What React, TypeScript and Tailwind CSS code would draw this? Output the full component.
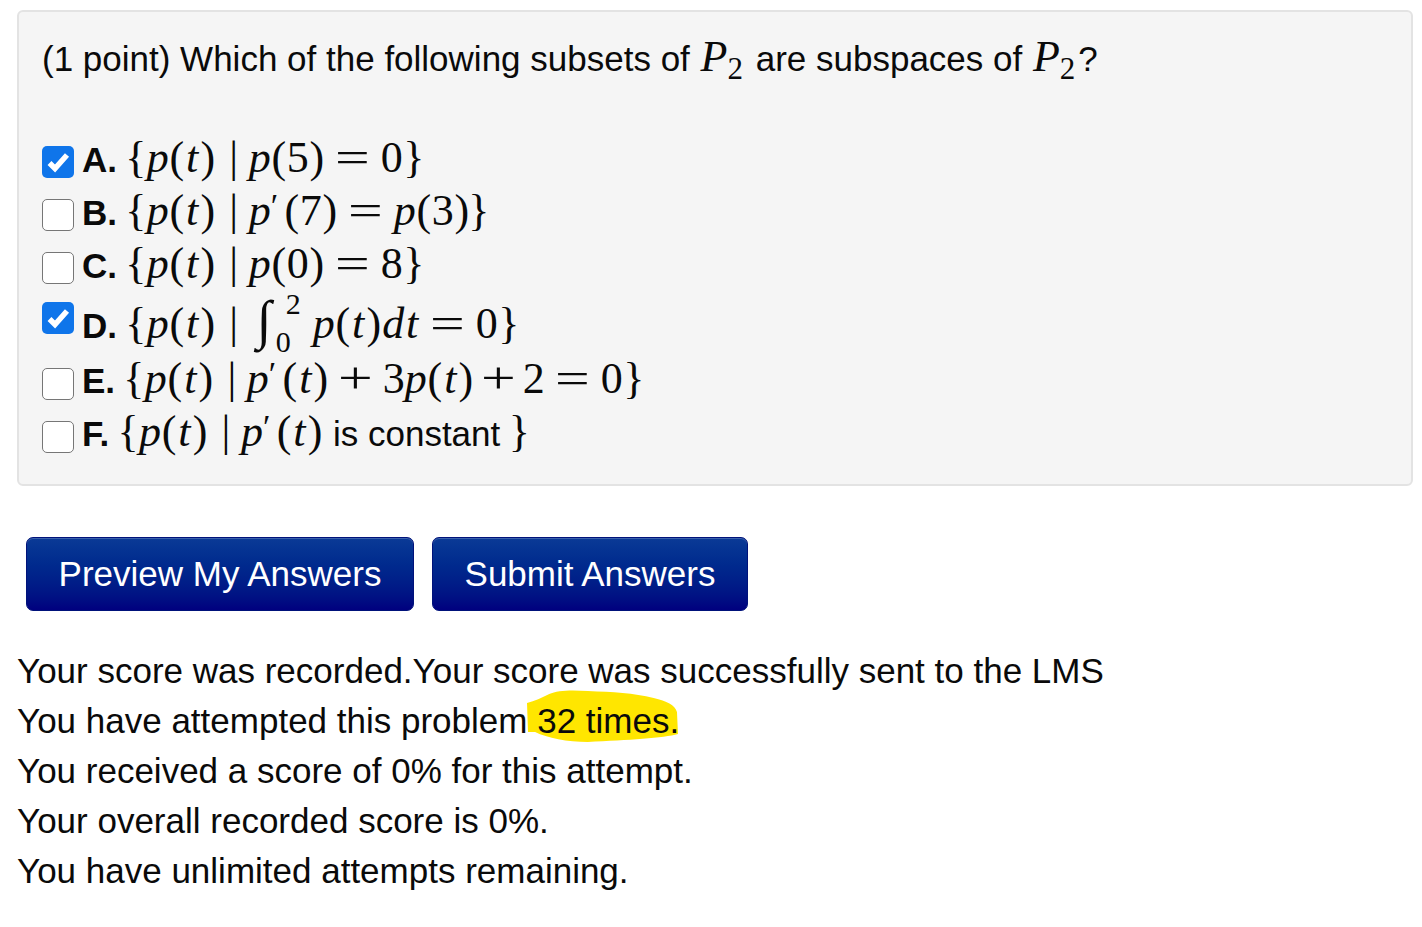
import React from "react";

const serif = "font-['Liberation_Serif',serif] text-[44px] leading-[44px]";
const g = "inline-block text-center ";
const it = "italic ";

const LB = () => <span className={g + "-ml-[2px] w-[22px]"}>{"{"}</span>;
const RB = ({ cls = "" }: { cls?: string }) => <span className={g + "w-[22px] " + cls}>{"}"}</span>;
const Pp = () => <span className={g + it + "w-[22px]"}>p</span>;
const Pr = () => <span className={"inline-block w-[13px] text-left text-[34px] align-[8px] leading-none"}>′</span>;
const L = () => <span className={g + "w-[16px]"}>(</span>;
const R = () => <span className={g + "w-[16px]"}>)</span>;
const Tt = () => <span className={g + it + "w-[15px]"}>t</span>;
const Bar = () => <span className={g + "w-[33px] pl-[3px]"}>|</span>;
const D = ({ c }: { c: string }) => <span className={g + "w-[22px]"}>{c}</span>;
const Op = ({ c, w = "w-[56px]" }: { c: string; w?: string }) => (
  <span className={g + w}>
    <span className="inline-block scale-x-[1.4]">{c}</span>
  </span>
);
const PT = () => (
  <>
    <Pp />
    <L />
    <Tt />
    <R />
  </>
);
const Head = () => (
  <>
    <LB />
    <PT />
    <Bar />
  </>
);
const Arg = ({ c }: { c: string }) => (
  <>
    <Pp />
    <L />
    <D c={c} />
    <R />
  </>
);

const P2 = () => (
  <span className="ml-[1px] mr-[3px] font-['Liberation_Serif',serif] text-[44px] leading-[44px] whitespace-nowrap">
    <span className="italic">P</span>
    <span className="text-[31px] leading-none align-[-8px]">2</span>
  </span>
);

const Box = ({ on, cls }: { on?: boolean; cls?: string }) =>
  on ? (
    <span className={"flex h-[32px] w-[32px] shrink-0 items-center justify-center rounded-[5px] bg-[#0f75ea] " + (cls ?? "")}>
      <svg viewBox="0 0 32 32" className="h-[32px] w-[32px]" fill="none">
        <path d="M7.5 17 L13 22.5 L25 9" stroke="#fff" strokeWidth="5.5" />
      </svg>
    </span>
  ) : (
    <span className={"h-[32px] w-[32px] shrink-0 rounded-[5px] border border-[#767676] bg-white " + (cls ?? "")} />
  );

const Row = ({
  label,
  on,
  children,
  h,
  boxCls,
  pt,
}: {
  label: string;
  on?: boolean;
  children: React.ReactNode;
  h: string;
  boxCls?: string;
  pt: string;
}) => (
  <div className={"flex items-start " + h}>
    <Box on={on} cls={boxCls} />
    <div className={"ml-[8px] whitespace-nowrap leading-[34px] " + pt}>
      <b className="font-bold">{label}</b> <span className={serif}>{children}</span>
    </div>
  </div>
);

const Btn = ({ children, w }: { children: React.ReactNode; w: string }) => (
  <button
    className={
      "h-[74px] rounded-[7px] border border-[#00127a] bg-gradient-to-b from-[#0b3a96] to-[#00007f] text-center text-[35px] text-white shadow-[inset_0_1px_0_rgba(255,255,255,0.2)] " +
      w
    }
  >
    {children}
  </button>
);

export default function App() {
  return (
    <div className="min-h-[927px] bg-white pl-[17px] pr-[9px] pt-[10px] font-['Liberation_Sans',Arial,sans-serif] text-[35px] text-[#0a0a0a]">
      <div className="h-[476px] rounded-[6px] border-2 border-[#e3e3e3] bg-[#f5f5f5] pl-[23px] pt-[22px]">
        <div className="flex h-[112px] items-start whitespace-nowrap leading-[50px]">
          <span>
            (1 point) Which of the following subsets of <P2 /> are subspaces of <P2 />?
          </span>
        </div>
        <Row label="A." on h="h-[53px]" pt="-mt-[10px]">
          <Head />
          <Arg c="5" />
          <Op c="=" />
          <D c="0" />
          <RB />
        </Row>
        <Row label="B." h="h-[53px]" pt="-mt-[10px]">
          <Head />
          <Pp />
          <Pr />
          <L />
          <D c="7" />
          <R />
          <Op c="=" />
          <Arg c="3" />
          <RB cls="-ml-[2px]" />
        </Row>
        <Row label="C." h="h-[53px]" pt="-mt-[10px]">
          <Head />
          <Arg c="0" />
          <Op c="=" />
          <D c="8" />
          <RB />
        </Row>
        <Row label="D." on h="h-[63px]" boxCls="-mt-[3px]" pt="-mt-[16px]">
          <Head />
          <span className={g + "w-[4px]"} />
          <span className={g + it + "w-[23px] text-[54px] leading-none"}>∫</span>
          <span className="text-[30px] leading-none align-[-14px]">0</span>
          <span className="-ml-[5px] text-[30px] leading-none align-[24px]">2</span>
          <span className={g + "w-[12px]"} />
          <PT />
          <span className={g + it + "w-[23px]"}>d</span>
          <Tt />
          <Op c="=" />
          <D c="0" />
          <RB />
        </Row>
        <Row label="E." h="h-[53px]" pt="-mt-[11px]">
          <Head />
          <Pp />
          <Pr />
          <L />
          <Tt />
          <R />
          <Op c="+" w="w-[54px]" />
          <D c="3" />
          <PT />
          <Op c="+" w="w-[49px]" />
          <D c="2" />
          <Op c="=" />
          <D c="0" />
          <RB />
        </Row>
        <Row label="F." h="h-[53px]" pt="-mt-[11px]">
          <Head />
          <Pp />
          <Pr />
          <L />
          <Tt />
          <R />
          <span className="ml-[10px] font-['Liberation_Sans',Arial,sans-serif] text-[35px]">is constant</span>
          <span className={g + "ml-[8px] w-[22px]"}>{"}"}</span>
        </Row>
      </div>

      <div className="ml-[9px] mt-[51px] flex gap-[18px]">
        <Btn w="w-[388px]">Preview My Answers</Btn>
        <Btn w="w-[316px]">Submit Answers</Btn>
      </div>

      <div className="mt-[35px] leading-[50px]">
        <div>Your score was recorded.Your score was successfully sent to the LMS</div>
        <div>
          You have attempted this problem{" "}
          <span className="relative isolate inline-block">
            <svg
              viewBox="0 0 150 53"
              className="absolute left-[-10px] top-[-6px] -z-10 h-[53px] w-[152px]"
              preserveAspectRatio="none"
            >
              <path
                d="M0 13 C8 11 14 8 22 4 C30 0 45 0 60 1 C85 2 105 3 125 8 C138 11 146 15 148 22 L149 44 C135 48 100 50 60 52 C40 52 20 48 8 42 L1 42 Z"
                fill="#ffe600"
              />
            </svg>
            32 times.
          </span>
        </div>
        <div>You received a score of 0% for this attempt.</div>
        <div>Your overall recorded score is 0%.</div>
        <div>You have unlimited attempts remaining.</div>
      </div>
    </div>
  );
}
